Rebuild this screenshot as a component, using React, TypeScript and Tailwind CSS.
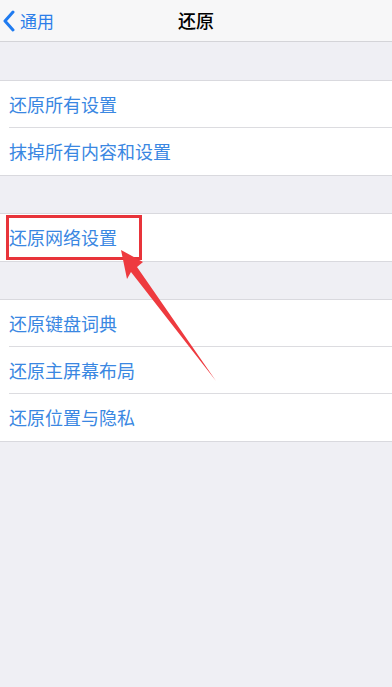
import React from "react";

const font = { fontFamily: '"Noto Sans CJK SC", "Noto Sans", sans-serif' };

function Row({ label, last }: { label: string; last?: boolean }) {
  return (
    <div className="pl-[9px]">
      <div
        className={`flex h-[47px] items-center text-[18px] text-[#3a87e2] ${
          last ? "" : "border-b border-[#dcdce0]"
        }`}
      >
        {label}
      </div>
    </div>
  );
}

function Group({ items }: { items: string[] }) {
  return (
    <div className="border-y border-[#d9d9de] bg-white">
      {items.map((t, i) => (
        <Row key={t} label={t} last={i === items.length - 1} />
      ))}
    </div>
  );
}

export default function App() {
  return (
    <div className="relative h-[687px] w-[392px] overflow-hidden bg-[#efeff4]" style={font}>
      <div className="relative flex h-[42px] items-center border-b border-[#d4d4d8] bg-[#f7f7f8]">
        <div className="flex items-center pl-[2px] text-[17px] text-[#2b7de9]">
          <svg width="14" height="22" viewBox="0 0 14 22" className="mr-[4px]">
            <path d="M11 2 L3 11 L11 20" fill="none" stroke="#1f7bf0" strokeWidth="3" strokeLinecap="round" strokeLinejoin="round" />
          </svg>
          通用
        </div>
        <div className="absolute left-1/2 -translate-x-1/2 text-[18px] font-medium text-black">还原</div>
      </div>

      <div className="mt-[38px]">
        <Group items={["还原所有设置", "抹掉所有内容和设置"]} />
      </div>
      <div className="mt-[37px]">
        <Group items={["还原网络设置"]} />
      </div>
      <div className="mt-[37px]">
        <Group items={["还原键盘词典", "还原主屏幕布局", "还原位置与隐私"]} />
      </div>

      <div className="absolute left-[6px] top-[215px] h-[45px] w-[136px] border-[3px] border-[#e8343a]" />
      <svg className="absolute left-0 top-0" width="392" height="687" viewBox="0 0 392 687">
        <polygon
          points="121,250 143,262 137,267 216,381 131,272 127,279"
          fill="#ee3a3f"
        />
      </svg>
    </div>
  );
}
